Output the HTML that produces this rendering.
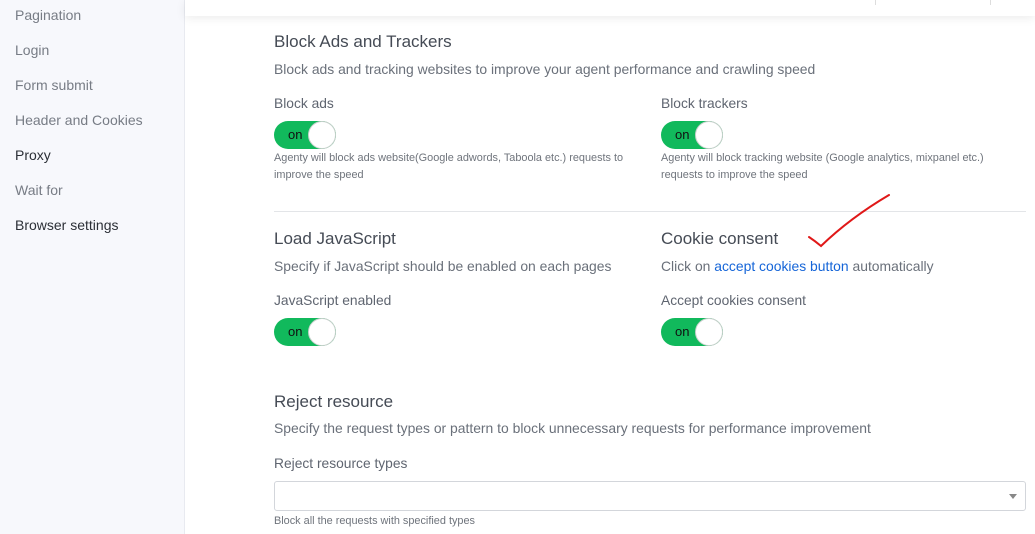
<!DOCTYPE html>
<html><head><meta charset="utf-8"><style>
*{margin:0;padding:0;box-sizing:border-box}
body{width:1035px;height:534px;overflow:hidden;background:#fff;font-family:"Liberation Sans",sans-serif;position:relative;color:#555b66}
.side{position:absolute;left:0;top:0;width:185px;height:534px;background:#f7f8fc;border-right:1px solid #e8eaf0}
.side div{position:absolute;left:15px;font-size:14px;color:#777c85}
.side .d{color:#2b2f36}
.hdr{position:absolute;left:185px;top:0;width:850px;height:16px;background:#fff;box-shadow:0 2px 10px rgba(0,0,0,.08)}
.t{position:absolute;white-space:nowrap}
.h{font-size:17px;color:#454b55}
.p{font-size:13.9px;color:#6a707a}
.l{font-size:13.8px;color:#5f6570}
.s{font-size:10.9px;color:#6f747c;line-height:17px}
.tg{position:absolute;width:62px;height:28px;border-radius:14px;background:#11b95c}
.tg span{position:absolute;left:14px;top:6px;font-size:13px;color:#111}
.tg i{position:absolute;right:0;top:0;width:28px;height:28px;border-radius:50%;background:#fff;border:1px solid #c8d0cc}
a{color:#1565d8;text-decoration:none}
</style></head><body>
<div class="side">
<div style="top:7px">Pagination</div>
<div style="top:42px">Login</div>
<div style="top:77px">Form submit</div>
<div style="top:112px">Header and Cookies</div>
<div class="d" style="top:147px">Proxy</div>
<div style="top:182px">Wait for</div>
<div class="d" style="top:217px">Browser settings</div>
</div>
<div class="hdr"><div style="position:absolute;left:690px;top:0;width:1px;height:5px;background:#ddd"></div><div style="position:absolute;left:805px;top:0;width:1px;height:5px;background:#ddd"></div></div>

<div class="t h" style="left:274px;top:32px">Block Ads and Trackers</div>
<div class="t p" style="left:274px;top:61px">Block ads and tracking websites to improve your agent performance and crawling speed</div>
<div class="t l" style="left:274px;top:96px">Block ads</div>
<div class="tg" style="left:274px;top:121px"><span>on</span><i></i></div>
<div class="t s" style="left:274px;top:150px">Agenty will block ads website(Google adwords, Taboola etc.) requests to<br>improve the speed</div>
<div class="t l" style="left:661px;top:96px">Block trackers</div>
<div class="tg" style="left:661px;top:121px"><span>on</span><i></i></div>
<div class="t s" style="left:661px;top:150px">Agenty will block tracking website (Google analytics, mixpanel etc.)<br>requests to improve the speed</div>

<div style="position:absolute;left:274px;top:211px;width:752px;height:1px;background:#e3e5e8"></div>

<div class="t h" style="left:274px;top:229px">Load JavaScript</div>
<div class="t p" style="left:274px;top:258px">Specify if JavaScript should be enabled on each pages</div>
<div class="t l" style="left:274px;top:293px">JavaScript enabled</div>
<div class="tg" style="left:274px;top:318px"><span>on</span><i></i></div>
<div class="t h" style="left:661px;top:229px">Cookie consent</div>
<div class="t p" style="left:661px;top:258px">Click on <a>accept cookies button</a> automatically</div>
<div class="t l" style="left:661px;top:293px">Accept cookies consent</div>
<div class="tg" style="left:661px;top:318px"><span>on</span><i></i></div>
<svg style="position:absolute;left:0;top:0" width="1035" height="534"><path d="M809 237 Q815 241 821 246 Q850 218 889 195" fill="none" stroke="#e01818" stroke-width="2" stroke-linecap="round"/></svg>

<div class="t h" style="left:274px;top:392px">Reject resource</div>
<div class="t p" style="left:274px;top:420px">Specify the request types or pattern to block unnecessary requests for performance improvement</div>
<div class="t l" style="left:274px;top:456px">Reject resource types</div>
<div style="position:absolute;left:274px;top:481px;width:752px;height:30px;border:1px solid #d3d6db;border-radius:3px"><div style="position:absolute;right:8px;top:12px;width:0;height:0;border-left:4px solid transparent;border-right:4px solid transparent;border-top:5px solid #888"></div></div>
<div class="t s" style="left:274px;top:513px">Block all the requests with specified types</div>
</body></html>
